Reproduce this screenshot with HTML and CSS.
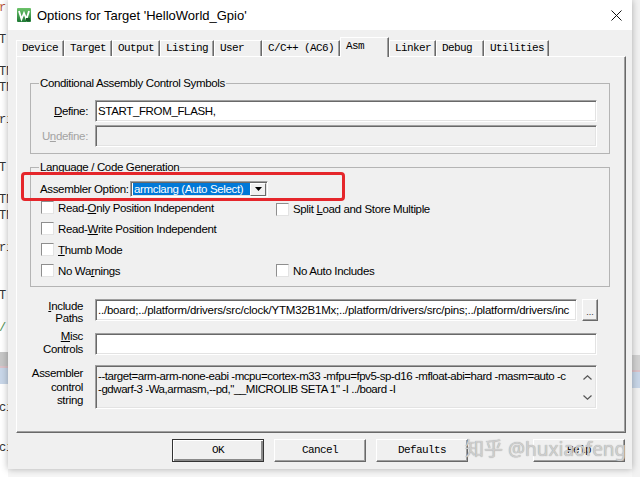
FILE: index.html
```html
<!DOCTYPE html>
<html lang="en">
<head>
    <meta charset="UTF-8">
    <meta name="viewport" content="width=device-width, initial-scale=1.0">
    <title>Options for Target</title>
    <link rel="stylesheet" href="styles.css">
</head>
<body>
<div class="screen">
    <!-- editor window behind the dialog -->
    <div class="behind-left">
        <div class="ln ln-red">r</div>
        <div class="ln"></div>
        <div class="ln">T</div>
        <div class="ln"></div>
        <div class="ln">TM</div>
        <div class="ln">TM</div>
        <div class="ln"></div>
        <div class="ln">ri</div>
        <div class="ln"></div>
        <div class="ln"></div>
        <div class="ln">T</div>
        <div class="ln"></div>
        <div class="ln">TM</div>
        <div class="ln">TM</div>
        <div class="ln"></div>
        <div class="ln">ri</div>
        <div class="ln"></div>
        <div class="ln"></div>
        <div class="ln">T</div>
        <div class="ln"></div>
        <div class="ln ln-green">/</div>
        <div class="ln"></div>
        <div class="band-grey"></div>
        <div class="band-pink"></div>
        <div class="band-blue"></div>
        <div class="ln"></div>
        <div class="ln">ci</div>
        <div class="gap24"></div>
        <div class="ln">ci</div>
    </div>

    <div class="dialog">
        <div class="titlebar">
            <svg class="app-icon" width="14" height="14" viewBox="0 0 14 14">
                <defs>
                    <linearGradient id="g" x1="0" y1="0" x2="0" y2="1">
                        <stop offset="0" stop-color="#6cc36a"/>
                        <stop offset="1" stop-color="#1f7a35"/>
                    </linearGradient>
                </defs>
                <rect x="0" y="0" width="14" height="14" rx="1" fill="url(#g)"/>
                <polyline points="2,3 4.5,11 7,5 9.5,11 12,3" fill="none" stroke="#fff" stroke-width="1.8"/>
                <rect x="9" y="10" width="4" height="3" fill="#1a5c28"/>
            </svg>
            <span class="title">Options for Target 'HelloWorld_Gpio'</span>
            <svg class="close" width="11" height="11" viewBox="0 0 11 11">
                <path d="M0.5 0.5 L10.5 10.5 M10.5 0.5 L0.5 10.5" stroke="#111" stroke-width="1"/>
            </svg>
        </div>

        <div class="dlg-body">
            <div class="tabs">
                <div class="tab tab-48">Device</div>
                <div class="tab tab-48">Target</div>
                <div class="tab tab-48">Output</div>
                <div class="tab tab-54">Listing</div>
                <div class="tab tab-48">User</div>
                <div class="tab tab-78">C/C++ (AC6)</div>
                <div class="tab tab-49 tab-active">Asm</div>
                <div class="tab tab-47">Linker</div>
                <div class="tab tab-48">Debug</div>
                <div class="tab tab-65">Utilities</div>
            </div>

            <div class="panel">
                <fieldset class="group group-cond">
                    <legend>Conditional Assembly Control Symbols</legend>
                    <div class="field-grid">
                        <div class="lbl"><u>D</u>efine:</div>
                        <div class="edit">START_FROM_FLASH,</div>
                        <div class="lbl lbl-off">U<u>n</u>define:</div>
                        <div class="edit edit-off"></div>
                    </div>
                </fieldset>

                <fieldset class="group group-lang">
                    <legend>Language / Code Generation</legend>
                    <div class="lang-inner">
                        <div class="asm-row">
                            <span class="asm-lbl">Assembler Option:</span>
                            <div class="combo">
                                <span class="combo-sel">armclang (Auto Select)</span>
                                <span class="combo-btn">
                                    <svg width="7" height="4" viewBox="0 0 7 4"><path d="M0 0 H7 L3.5 4 Z" fill="#000"/></svg>
                                </span>
                            </div>
                        </div>
                        <div class="checks">
                            <div class="check"><span class="box"></span><span>Read-<u>O</u>nly Position Independent</span></div>
                            <div class="check check-low"><span class="box"></span><span>Split <u>L</u>oad and Store Multiple</span></div>
                            <div class="check"><span class="box"></span><span>Read-<u>W</u>rite Position Independent</span></div>
                            <div></div>
                            <div class="check"><span class="box"></span><span><u>T</u>humb Mode</span></div>
                            <div></div>
                            <div class="check"><span class="box"></span><span>No Wa<u>r</u>nings</span></div>
                            <div class="check"><span class="box"></span><span>No Auto Includes</span></div>
                        </div>
                    </div>
                </fieldset>

                <div class="opt-rows">
                    <div class="opt-row">
                        <div class="opt-lbl opt-lbl-inc"><u>I</u>nclude<br>Paths</div>
                        <div class="inc-wrap">
                            <div class="edit edit-grow">../board;../platform/drivers/src/clock/YTM32B1Mx;../platform/drivers/src/pins;../platform/drivers/inc</div>
                            <div class="mini-btn">...</div>
                        </div>
                    </div>
                    <div class="opt-row">
                        <div class="opt-lbl opt-lbl-misc"><u>M</u>isc<br>Controls</div>
                        <div class="edit"></div>
                    </div>
                    <div class="opt-row">
                        <div class="opt-lbl opt-lbl-asm">Assembler<br>control<br>string</div>
                        <div class="memo">
                            <div class="memo-text">--target=arm-arm-none-eabi -mcpu=cortex-m33 -mfpu=fpv5-sp-d16 -mfloat-abi=hard -masm=auto -c<br>-gdwarf-3 -Wa,armasm,--pd,"__MICROLIB SETA 1" -I ../board -I</div>
                            <div class="vscroll">
                                <svg width="9" height="5" viewBox="0 0 9 5"><path d="M0.5 4.5 L4.5 0.8 L8.5 4.5" fill="none" stroke="#555" stroke-width="1.2"/></svg>
                                <svg width="9" height="5" viewBox="0 0 9 5"><path d="M0.5 0.5 L4.5 4.2 L8.5 0.5" fill="none" stroke="#555" stroke-width="1.2"/></svg>
                            </div>
                        </div>
                    </div>
                </div>
            </div>

            <div class="btn-row">
                <div class="btn btn-default">OK</div>
                <div class="btn">Cancel</div>
                <div class="btn">Defaults</div>
                <div class="btn btn-help">Help</div>
            </div>
        </div>
    </div>

    <div class="behind-right">
        <div class="band-grey band-r"></div>
        <div class="band-pink"></div>
        <div class="band-blue"></div>
    </div>

    <div class="callout"></div>
    <div class="watermark">知乎 @huxiaofeng</div>
</div>
</body>
</html>
```

FILE: styles.css
```css
* {
    box-sizing: border-box;
}
body {
    margin: 0;
    background: #fff;
}
.screen {
    position: relative;
    display: flex;
    width: 640px;
    height: 477px;
    overflow: hidden;
    background: #f6f6f6;
}

/* window behind */
.behind-left {
    width: 8px;
    flex: none;
    background: #fff;
    overflow: hidden;
    font: 12px/16px "Liberation Mono", monospace;
    color: #333;
}
.behind-left .ln {
    height: 16px;
    margin-left: -1px;
    white-space: nowrap;
}
.behind-left .ln-red {
    color: #b5533a;
}
.behind-left .ln-green {
    color: #4d8f4d;
}
.band-grey {
    height: 14px;
    background: #c6c6c6;
}
.band-pink {
    height: 2px;
    background: #dcc2c8;
}
.band-blue {
    height: 16px;
    background: #c8d6e8;
}
.gap24 {
    height: 24px;
}
.behind-right {
    flex: 1;
    background: #f2f2f2;
    padding-top: 355px;
}
.band-r {
    height: 15px;
    background: #d2d2d2;
}

/* dialog */
.dialog {
    position: relative;
    z-index: 1;
    flex: none;
    width: 624px;
    height: 469px;
    background: #f0f0f0;
    box-shadow: 0 0 7px rgba(0, 0, 0, 0.3);
    font-family: "Liberation Sans", Arial, sans-serif;
    font-size: 11.5px;
    letter-spacing: -0.35px;
    color: #000;
}
.titlebar {
    height: 30px;
    background: #fff;
    display: flex;
    align-items: center;
    padding-left: 9px;
}
.app-icon {
    margin-right: 6px;
}
.title {
    font-size: 13px;
    letter-spacing: 0;
}
.close {
    margin-left: auto;
    margin-right: 10px;
}

.dlg-body {
    padding: 7px 6px 0 8px;
}

/* tabs */
.tabs {
    display: flex;
    align-items: flex-end;
    height: 19px;
    font: 11px "Liberation Mono", monospace;
    letter-spacing: -0.6px;
}
.tab {
    height: 16px;
    line-height: 15px;
    padding-left: 5px;
    white-space: nowrap;
    border-top: 1px solid #fff;
    border-left: 1px solid #fff;
    border-right: 1px solid #696969;
    box-shadow: inset -1px 0 #a0a0a0;
}
.tab-active {
    position: relative;
    z-index: 1;
    height: 20px;
    margin-bottom: -1px;
    padding-top: 1px;
    background: #f0f0f0;
}
.tab-47 { width: 47px; }
.tab-48 { width: 48px; }
.tab-49 { width: 49px; }
.tab-54 { width: 54px; }
.tab-65 { width: 65px; }
.tab-78 { width: 78px; }

.panel {
    height: 377px;
    border: 1px solid;
    border-color: #fff #696969 #696969 #fff;
    box-shadow: inset -1px -1px #a0a0a0;
}

/* group boxes */
.group {
    margin: 0 15px 0 13px;
    padding: 0;
    min-width: 0;
    border: 1px solid #b4b4b4;
}
.group legend {
    margin-left: 8px;
    padding: 0 1px;
    line-height: 14px;
}
.group-cond {
    margin-top: 19px;
}
.group-lang {
    margin-top: 6px;
}
.field-grid {
    display: grid;
    grid-template-columns: 57px 1fr;
    grid-auto-rows: 22px;
    gap: 3px 7px;
    padding: 10px 12px 6px 0;
}
.lbl {
    text-align: right;
    line-height: 22px;
}
.lbl-off {
    color: #a3a3a3;
}

.edit {
    height: 22px;
    background: #fff;
    border: 1px solid;
    border-color: #a0a0a0 #fff #fff #a0a0a0;
    box-shadow: inset 1px 1px #696969, inset -1px -1px #e3e3e3;
    padding: 0 2px;
    line-height: 20px;
    white-space: nowrap;
    overflow: hidden;
}
.edit-off {
    background: #f0f0f0;
}

.lang-inner {
    padding: 7px 0 5px 9px;
}
.asm-row {
    display: flex;
    align-items: center;
    height: 16px;
}
.asm-lbl {
    width: 90px;
    white-space: nowrap;
}
.combo {
    display: flex;
    align-items: center;
    width: 138px;
    height: 16px;
    padding: 1px 1px 1px 2px;
    background: #fff;
    border: 1px solid;
    border-color: #a0a0a0 #fff #fff #a0a0a0;
    box-shadow: inset 1px 1px #696969, inset -1px -1px #e3e3e3;
}
.combo-sel {
    width: 117px;
    height: 12px;
    line-height: 12px;
    padding-left: 1px;
    background: #0078d7;
    color: #fff;
    white-space: nowrap;
    overflow: hidden;
}
.combo-btn {
    display: flex;
    align-items: center;
    justify-content: center;
    width: 16px;
    height: 13px;
    margin-left: auto;
    background: #f0f0f0;
    border: 1px solid;
    border-color: #fff #696969 #696969 #fff;
}

.checks {
    display: grid;
    grid-template-columns: 235px 1fr;
    grid-auto-rows: 21px;
}
.check {
    display: flex;
    align-items: center;
    white-space: nowrap;
}
.check-low {
    padding-top: 3px;
}
.box {
    flex: none;
    width: 13px;
    height: 13px;
    margin: 0 4px 0 1px;
    background: #fff;
    border: 1px solid;
    border-color: #8e8e8e #e3e3e3 #e3e3e3 #8e8e8e;
}

/* path / control rows */
.opt-rows {
    display: flex;
    flex-direction: column;
    gap: 9px;
    margin: 12px 28px 0 0;
}
.opt-row {
    display: grid;
    grid-template-columns: 66px 1fr;
    column-gap: 12px;
}
.opt-lbl {
    text-align: right;
}
.opt-lbl-inc {
    margin-top: 1px;
    line-height: 12px;
}
.opt-lbl-misc {
    margin-top: -3px;
    line-height: 13px;
}
.opt-lbl-asm {
    margin-top: 2px;
    line-height: 13.5px;
}
.inc-wrap {
    display: flex;
    gap: 5px;
}
.edit-grow {
    flex: 1;
    letter-spacing: -0.22px;
}
.mini-btn {
    width: 16px;
    height: 22px;
    margin-right: -1px;
    border: 1px solid;
    border-color: #fff #696969 #696969 #fff;
    box-shadow: inset -1px -1px #a0a0a0;
    font-size: 9px;
    letter-spacing: 0;
    text-align: center;
    line-height: 24px;
    color: #333;
}
.memo {
    display: flex;
    height: 44px;
    background: #f0f0f0;
    border: 1px solid;
    border-color: #a0a0a0 #fff #fff #a0a0a0;
    box-shadow: inset 1px 1px #696969, inset -1px -1px #e3e3e3;
}
.memo-text {
    flex: 1;
    padding: 4px 2px 0;
    line-height: 12.5px;
    letter-spacing: -0.45px;
    white-space: nowrap;
    overflow: hidden;
}
.vscroll {
    width: 17px;
    display: flex;
    flex-direction: column;
    align-items: center;
    justify-content: space-between;
    padding: 9px 0 8px;
}

/* buttons */
.btn-row {
    display: flex;
    gap: 10px;
    margin-top: 6px;
    padding: 0 1px 0 156px;
}
.btn {
    width: 92px;
    height: 23px;
    border: 1px solid;
    border-color: #fff #696969 #696969 #fff;
    box-shadow: inset -1px -1px #a0a0a0;
    font: 11px/21px "Liberation Mono", monospace;
    letter-spacing: -0.6px;
    text-align: center;
}
.btn-default {
    border-color: #333;
    box-shadow: inset 1px 1px #fff, inset -2px -2px #8a8a8a;
}
.btn-help {
    margin-left: auto;
}

/* overlays */
.callout {
    position: absolute;
    z-index: 2;
    left: 21px;
    top: 172px;
    width: 324px;
    height: 29px;
    border: 3px solid #e5262b;
    border-radius: 4px;
}
.watermark {
    position: absolute;
    z-index: 3;
    left: 465px;
    top: 437px;
    font: 19px/24px "Noto Sans", "Noto Sans CJK SC", sans-serif;
    color: rgba(214, 214, 214, 0.9);
    text-shadow: 0 0 1px #8c8c8c;
    white-space: nowrap;
}
```
